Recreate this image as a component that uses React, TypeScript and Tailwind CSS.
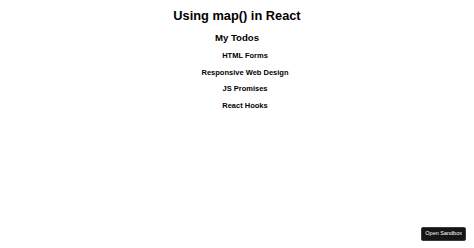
export default function App() {
  const todos = ["HTML Forms", "Responsive Web Design", "JS Promises", "React Hooks"];

  return (
    <div className="relative h-[248px] w-[474px] overflow-hidden bg-white text-black font-['Liberation_Sans',Arial,sans-serif]">
      <div className="text-center pt-[8.6px]">
        <h1 className="text-[12.8px] leading-[14.7px] font-bold">Using map() in React</h1>
        <h2 className="mt-[8.6px] text-[9.6px] leading-[11px] font-bold">My Todos</h2>
        <ul className="mt-[9.5px] pl-[16px]">
          {todos.map((t, i) => (
            <li key={t} className={i > 0 ? "mt-[7.8px]" : ""}>
              <h3 className="text-[7.5px] leading-[8.6px] font-bold">{t}</h3>
            </li>
          ))}
        </ul>
      </div>

      {/* sandbox badge */}
      <button className="absolute right-[8px] bottom-[7px] h-[14px] px-[3px] rounded-[2px] border border-[#3a3a3a] bg-[#151515] text-white text-[5.5px] leading-none">
        Open Sandbox
      </button>
    </div>
  );
}
